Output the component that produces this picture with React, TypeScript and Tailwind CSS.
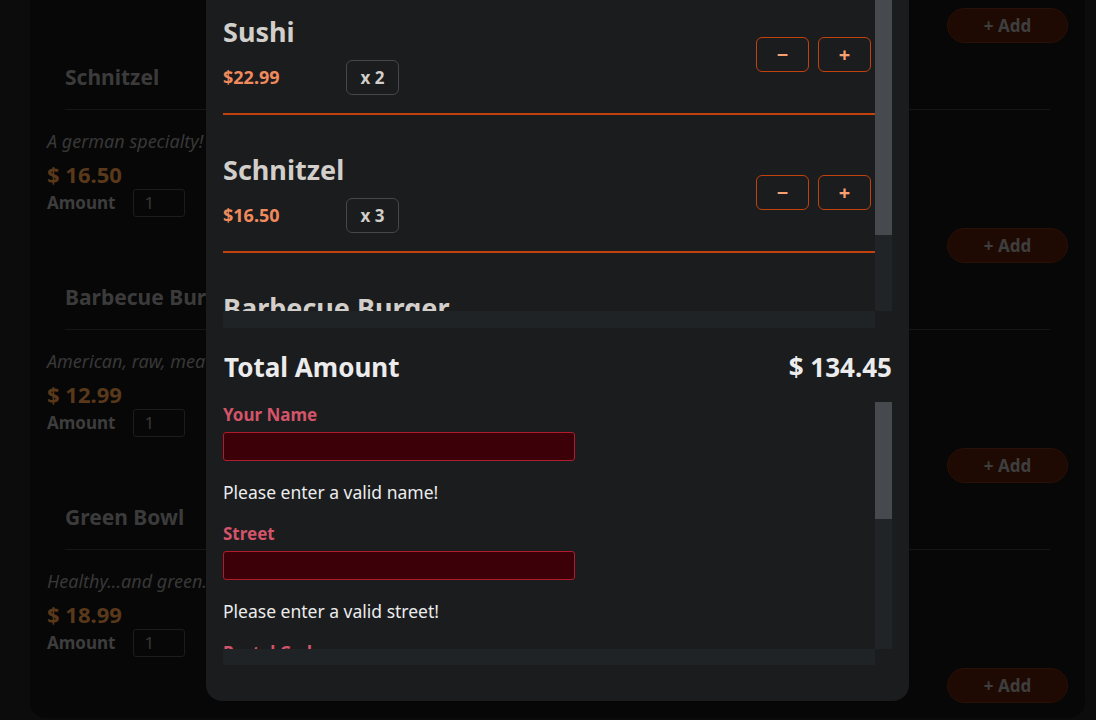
const meals = [
  { id: 'm1', name: 'Sushi', description: 'Finest fish and veggies', price: 22.99 },
  { id: 'm2', name: 'Schnitzel', description: 'A german specialty!', price: 16.5 },
  { id: 'm3', name: 'Barbecue Burger', description: 'American, raw, meaty', price: 12.99 },
  { id: 'm4', name: 'Green Bowl', description: 'Healthy...and green...', price: 18.99 },
];

const cartItems = [
  { id: 'c1', name: 'Sushi', price: 22.99, amount: 2 },
  { id: 'c2', name: 'Schnitzel', price: 16.5, amount: 3 },
  { id: 'c3', name: 'Barbecue Burger', price: 12.99, amount: 4 },
];

const fields = [
  { id: 'name', label: 'Your Name', error: 'Please enter a valid name!' },
  { id: 'street', label: 'Street', error: 'Please enter a valid street!' },
  { id: 'postal', label: 'Postal Code', error: 'Please enter a valid postal code!' },
];

const font = { fontFamily: '"Noto Sans", "Lato", sans-serif' };

function MealItem({ meal }: { meal: (typeof meals)[number] }) {
  return (
    <li className="flex flex-col">
      <h3 className="mx-[18px] text-[21px] leading-[28px] font-bold text-[#3b3b3b]">{meal.name}</h3>
      <div className="mx-[18px] mt-[18px] h-px bg-[#161616]" />
      <div className="mt-[19px] text-[18px] leading-[24px] italic text-[#383838]">{meal.description}</div>
      <div className="mt-[7px] text-[22px] leading-[28px] font-bold text-[#5a391b]">$ {meal.price.toFixed(2)}</div>
      <div className="mt-px flex h-[28px] items-center gap-[18px]">
        <span className="text-[17px] font-bold text-[#3d3d3d]">Amount</span>
        <div className="flex h-[28px] w-[52px] items-center rounded-[3px] border border-[#1c1c1c] px-[10px] text-[17px] text-[#383838]">
          1
        </div>
      </div>
      <div className="mt-[11px] mb-[20px] flex justify-end">
        <button className="h-[35px] w-[121px] rounded-full border border-[#2a1007] bg-[#1e0a03] text-[17px] font-bold text-[#3e3e3e]">
          + Add
        </button>
      </div>
    </li>
  );
}

function CartItem({ item }: { item: (typeof cartItems)[number] }) {
  return (
    <li className="flex items-center justify-between border-b-2 border-[#c2410c] pt-[37px] pb-[18px]">
      <div className="flex flex-col">
        <h2 className="text-[27px] leading-[36px] font-bold text-[#d2cfcb]">{item.name}</h2>
        <div className="mt-[10px] flex h-[35px] items-center">
          <span className="w-[123px] text-[18px] font-bold text-[#f08a5d]">${item.price.toFixed(2)}</span>
          <span className="flex h-[35px] w-[53px] items-center justify-center rounded-[6px] border border-[#46474a] text-[17px] font-bold text-[#d2cfcb]">
            x {item.amount}
          </span>
        </div>
      </div>
      <div className="mr-[4px] flex gap-[9px]">
        <button className="flex h-[35px] w-[53px] items-center justify-center rounded-[6px] border border-[#c2410c] text-[20px] font-bold text-[#f7a072]">
          −
        </button>
        <button className="flex h-[35px] w-[53px] items-center justify-center rounded-[6px] border border-[#c2410c] text-[20px] font-bold text-[#f7a072]">
          +
        </button>
      </div>
    </li>
  );
}

export default function App() {
  return (
    <div className="relative h-[720px] w-[1096px] overflow-hidden bg-[#0c0c0c]" style={font}>
      {/* meals card, dimmed behind the overlay */}
      <div className="ml-[30px] h-[718px] w-[1055px] overflow-hidden rounded-b-[16px] bg-[#070707] px-[17px]">
        <ul className="-mt-[157px] flex flex-col">
          {meals.map((meal) => (
            <MealItem key={meal.id} meal={meal} />
          ))}
        </ul>
      </div>

      {/* cart modal */}
      <div className="absolute left-[206px] top-[-20px] flex h-[721px] w-[703px] flex-col rounded-[16px] bg-[#1b1c1e] px-[17px] pb-[36px]">
        <div className="flex flex-col">
          <div className="flex h-[331px]">
            <div className="w-[652px] overflow-hidden">
              <ul className="-mt-[3px] flex flex-col">
                {cartItems.map((item) => (
                  <CartItem key={item.id} item={item} />
                ))}
              </ul>
            </div>
            <div className="flex w-[17px] flex-col bg-[#202426]">
              <div className="h-[255px] bg-[#464a4e]" />
            </div>
          </div>
          <div className="flex h-[17px]">
            <div className="w-[652px] bg-[#202325]" />
            <div className="w-[17px] bg-[#1b1c1e]" />
          </div>
        </div>

        <div className="mt-[21px] flex items-center justify-between">
          <span className="pl-px text-[26px] leading-[36px] font-bold text-[#ececec]">Total Amount</span>
          <span className="text-[26px] leading-[36px] font-bold text-[#ececec]">$ 134.45</span>
        </div>

        <form className="mt-[17px] flex flex-col">
          <div className="flex h-[247px]">
            <div className="w-[652px] overflow-hidden pt-[2px]">
              {fields.map((field) => (
                <div key={field.id} className="mb-[20px] flex flex-col">
                  <label className="text-[17px] leading-[22px] font-bold text-[#d4546a]">{field.label}</label>
                  <input
                    type="text"
                    className="mt-[6px] h-[29px] w-[352px] rounded-[3px] border border-[#b01c2e] bg-[#3b0008] outline-none"
                  />
                  <p className="mt-[20px] text-[17.5px] leading-[22px] text-[#ececec]">{field.error}</p>
                </div>
              ))}
            </div>
            <div className="flex w-[17px] flex-col bg-[#202426]">
              <div className="h-[117px] bg-[#464a4e]" />
            </div>
          </div>
          <div className="flex h-[16px]">
            <div className="w-[652px] bg-[#202325]" />
            <div className="w-[17px] bg-[#1b1c1e]" />
          </div>
        </form>
      </div>
    </div>
  );
}
